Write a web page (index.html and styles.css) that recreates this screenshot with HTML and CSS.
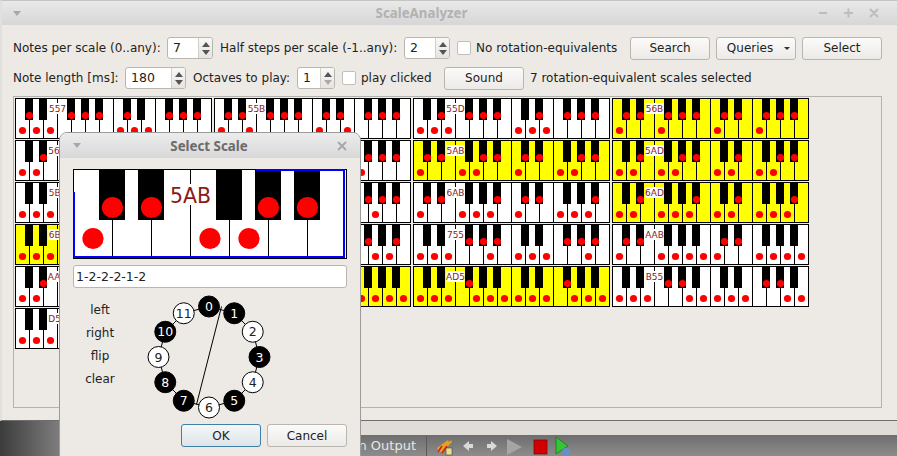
FILE: index.html
```html
<!DOCTYPE html>
<html lang="en">
<head>
    <meta charset="UTF-8">
    <title>ScaleAnalyzer</title>
    <link rel="stylesheet" href="styles.css">
</head>
<body>
    <div class="window">
        <div class="titlebar">
            <span class="menu-arrow"></span>
            <span class="title">ScaleAnalyzer</span>
            <svg class="win-buttons" width="64" height="12" viewBox="0 0 64 12">
                <path d="M0 6h8M25 6h9M29.500 1.500v9M51 2l8 8M59 2l-8 8" stroke="#bdbdbd" stroke-width="2" fill="none"/>
            </svg>
        </div>
        <div class="content">
            <div class="row">
                <label class="w-notes">Notes per scale (0..any):</label>
                <div class="spin w-46"><span>7</span><i class="arrows"><b class="up"></b><b class="down"></b></i></div>
                <label class="w-steps">Half steps per scale (-1..any):</label>
                <div class="spin w-46"><span>2</span><i class="arrows"><b class="up"></b><b class="down"></b></i></div>
                <span class="check"></span>
                <label class="w-norot">No rotation-equivalents</label>
                <button class="btn">Search</button>
                <button class="btn btn-menu">Queries<i class="caret"></i></button>
                <button class="btn">Select</button>
            </div>
            <div class="row row-last">
                <label class="w-length">Note length [ms]:</label>
                <div class="spin w-61"><span>180</span><i class="arrows"><b class="up"></b><b class="down"></b></i></div>
                <label class="w-octaves">Octaves to play:</label>
                <div class="spin w-38"><span>1</span><i class="arrows"><b class="up"></b><b class="down off"></b></i></div>
                <span class="check"></span>
                <label class="w-play">play clicked</label>
                <button class="btn">Sound</button>
                <label>7 rotation-equivalent scales selected</label>
            </div>
            <div class="scales" id="scales"></div>
        </div>
    </div>

    <div class="bottom">
        <div class="side"></div>
        <div class="rest">
            <div class="strip"></div>
            <div class="toolbar">
                <span class="tool-label">on Output</span>
                <span class="tool-sep"></span>
                <svg width="150" height="20" viewBox="0 0 150 20">
                    <path d="M0 12l11-8 1 2-7 7 9-9 1 2-10 10H2z" fill="#e8a020"/>
                    <path d="M1 16l4-6M5 17l5-7" stroke="#c22" stroke-width="1.500"/>
                    <rect x="9" y="12" width="6" height="7" fill="#e6e08a" stroke="#444" stroke-width=".6"/>
                    <path d="M32 5v3h4v4h-4v3l-6-5zM54 5v3h-4v4h4v3l6-5z" fill="#d9d9d9"/>
                    <path d="M70 3l15 8-15 8z" fill="#a5a5a5"/>
                    <rect x="97" y="4" width="13" height="14" fill="#d40000" stroke="#700" stroke-width=".7"/>
                    <path d="M119 1l12 9-12 8z" fill="#35c435" stroke="#1a6a1a" stroke-width=".7"/>
                    <circle cx="129" cy="16" r="4" fill="#6a8fc8"/>
                </svg>
            </div>
        </div>
    </div>

    <div class="dialog">
        <div class="dialog-title">
            <span class="menu-arrow"></span>
            <span class="title">Select Scale</span>
            <svg class="dialog-close" width="10" height="10" viewBox="0 0 10 10">
                <path d="M1 1l8 8M9 1l-8 8" stroke="#a8a8a8" stroke-width="2"/>
            </svg>
        </div>
        <div class="dialog-body">
            <div class="big-keys" id="bigKeys"></div>
            <div class="text-input">1-2-2-2-1-2</div>
            <div class="dial-row">
                <ul class="dial-actions">
                    <li>left</li>
                    <li>right</li>
                    <li>flip</li>
                    <li>clear</li>
                </ul>
                <div id="dial"></div>
            </div>
            <div class="dialog-buttons">
                <button class="btn btn-ok">OK</button>
                <button class="btn">Cancel</button>
            </div>
        </div>
    </div>

    <script src="app.js"></script>
</body>
</html>
```

FILE: styles.css
```css
* {
    box-sizing: border-box;
}
html, body {
    margin: 0;
    padding: 0;
}
body {
    width: 897px;
    height: 456px;
    overflow: hidden;
    position: relative;
    background: #edeae5;
    font-family: "DejaVu Sans", sans-serif;
    font-size: 12px;
    color: #222;
}
label {
    white-space: nowrap;
}

/* main window */
.window {
    height: 421px;
    border-top: 1px solid #c4c4c4;
    border-left: 2px solid #e0e0de;
    border-bottom: 1px solid #6e6e6e;
    background: #edeae5;
}
.titlebar {
    height: 24px;
    display: flex;
    align-items: center;
    padding-left: 11px;
    background: linear-gradient(#e9e9e9, #d6d6d6);
}
.titlebar .title {
    flex: 1;
    text-align: center;
    font-family: "Noto Sans", sans-serif;
    font-weight: bold;
    font-size: 13.300px;
    color: #b2b2b2;
    padding-left: 3px;
}
.menu-arrow {
    width: 0;
    height: 0;
    border-left: 4px solid transparent;
    border-right: 4px solid transparent;
    border-top: 5px solid #a8a8a8;
}
.win-buttons {
    margin-right: 14px;
}
.content {
    padding: 12px 0 0 11px;
}
.row {
    display: flex;
    align-items: center;
    height: 22px;
    margin-bottom: 8px;
}
.row-last {
    margin-bottom: 7px;
}
.w-notes { width: 154px; }
.w-steps { width: 184px; }
.w-norot { width: 154px; }
.w-length { width: 112px; }
.w-octaves { width: 104px; }
.w-play { width: 83px; }

/* form controls */
.spin {
    height: 22px;
    display: flex;
    background: #fff;
    border: 1px solid #b9b6b0;
    border-radius: 3px;
    margin-right: 7px;
}
.spin span {
    flex: 1;
    padding-left: 5px;
    line-height: 20px;
    font-size: 12.500px;
}
.w-46 { width: 46px; }
.w-61 { width: 61px; }
.w-38 { width: 38px; }
.arrows {
    width: 14px;
    display: flex;
    flex-direction: column;
    justify-content: center;
    align-items: center;
    gap: 3px;
    border-left: 1px solid #d2cfca;
    background: linear-gradient(#f8f8f7, #e6e4e0);
    border-radius: 0 2px 2px 0;
}
.arrows b {
    width: 0;
    height: 0;
    border-left: 4px solid transparent;
    border-right: 4px solid transparent;
}
.arrows .up { border-bottom: 5px solid #555; }
.arrows .down { border-top: 5px solid #555; }
.arrows .off { border-top-color: #aaa; }
.check {
    width: 14px;
    height: 14px;
    background: #fff;
    border: 1px solid #c2bfba;
    border-radius: 2px;
    margin-right: 5px;
}
.btn {
    width: 80px;
    height: 23px;
    padding: 0;
    margin-right: 6px;
    font-family: "DejaVu Sans", sans-serif;
    font-size: 12px;
    color: #222;
    background: linear-gradient(#fbfbfa, #eceae7);
    border: 1px solid #b9b6b0;
    border-radius: 3px;
    position: relative;
}
.btn-menu {
    padding-right: 12px;
}
.caret {
    position: absolute;
    right: 5px;
    top: 9px;
    border-left: 3px solid transparent;
    border-right: 3px solid transparent;
    border-top: 3px solid #333;
}

/* scale grid */
.scales {
    width: 869px;
    height: 312px;
    border: 1px solid #b4b2ad;
    padding: 1px;
    display: grid;
    grid-template-columns: repeat(4, 197px);
    grid-auto-rows: 41px;
    column-gap: 2px;
    row-gap: 1px;
    align-content: start;
}
.scales svg {
    display: block;
}

/* area below the window */
.bottom {
    height: 35px;
    display: flex;
}
.side {
    width: 360px;
    background: linear-gradient(90deg, #3c3c3c, #7e7e7e 60px);
}
.rest {
    flex: 1;
    display: flex;
    flex-direction: column;
}
.strip {
    height: 14px;
    background: #e0ddd8;
}
.toolbar {
    flex: 1;
    display: flex;
    align-items: center;
    background: linear-gradient(#6e6e6e, #8c8c8c);
}
.tool-label {
    width: 56px;
    display: flex;
    justify-content: flex-end;
    white-space: nowrap;
    font-size: 13px;
    color: #e6e6e6;
}
.tool-sep {
    width: 1px;
    height: 20px;
    margin: 0 10px;
    background: #5a5a5a;
}

/* Select Scale dialog, floats over the main window */
.dialog {
    position: absolute;
    left: 59px;
    top: 132px;
    width: 302px;
    height: 330px;
    background: #edeae5;
    border: 1px solid #9a9a9a;
    border-radius: 8px 8px 0 0;
}
.dialog-title {
    height: 25px;
    display: flex;
    align-items: center;
    padding: 0 13px;
    border-radius: 7px 7px 0 0;
    background: linear-gradient(#ececec, #d8d8d8);
}
.dialog-title .title {
    flex: 1;
    text-align: center;
    font-family: "Noto Sans", sans-serif;
    font-weight: bold;
    font-size: 13.300px;
    color: #6b6b6b;
}
.dialog-body {
    padding: 11px 13px 0 13px;
}
.big-keys svg {
    display: block;
}
.text-input {
    height: 23px;
    margin-top: 6px;
    padding-left: 2px;
    line-height: 21px;
    font-size: 12.500px;
    background: #fff;
    border: 1px solid #b9b6b0;
    border-radius: 3px;
}
.dial-row {
    display: flex;
    height: 129px;
    margin-top: 7px;
}
.dial-actions {
    list-style: none;
    margin: 6px 0 0;
    padding: 0;
    width: 54px;
    text-align: center;
}
.dial-actions li {
    height: 23px;
    line-height: 18px;
}
#dial {
    margin-left: 20px;
}
#dial svg {
    display: block;
}
.dialog-buttons {
    display: flex;
    justify-content: flex-end;
    gap: 6px;
}
.dialog-buttons .btn {
    margin: 0;
}
.btn-ok {
    border-color: #3f7ea6;
    background: linear-gradient(#f4f7f8, #dde4e8);
}
```

FILE: app.js
```js
// all 7 note scales, label is the note set as hex (bit 0 = lowest note)
const scales = ['557', '55B', '55D', '56B', '56D', '575', '5AB', '5AD', '5B5', '5D5', '6AB',
    '6AD', '6B5', '6D5', '755', 'AAB', 'AAD', 'AB5', 'AD5', 'B55', 'D55'];
const selected = ['56B', '5AB', '5AD', '6AD', '6B5', 'AB5', 'AD5'];
// these labels are covered by the dialog anyway
const covered = ['575', '5D5', '6D5', 'AB5'];

// note in octave -> [is black, position in white keys]
const notePos = [[0, 0], [1, 1], [0, 1], [1, 2], [0, 2], [0, 3], [1, 4], [0, 4], [1, 5], [0, 5], [1, 6], [0, 6]];
const blackSlots = [1, 2, 4, 5, 6];

function keyboard(hex, o) {
    const bits = parseInt(hex, 16);
    const w = o.keyW * 7 * o.octaves;
    let s = `<svg width="${w + 1}" height="${o.h + 1}" viewBox="0 0 ${w + 1} ${o.h + 1}">`;
    s += `<rect x=".5" y=".5" width="${w}" height="${o.h}" fill="${o.fill}" stroke="#000" shape-rendering="crispEdges"/>`;

    for (let k = 1; k < 7 * o.octaves; k++) {
        s += `<path d="M${k * o.keyW + 0.5} 0V${o.h}" stroke="#000" shape-rendering="crispEdges"/>`;
    }
    for (let oct = 0; oct < o.octaves; oct++) {
        for (const b of blackSlots) {
            const x = (oct * 7 + b) * o.keyW - o.blackW / 2;
            s += `<rect x="${x}" y="0" width="${o.blackW}" height="${o.blackH}" shape-rendering="crispEdges"/>`;
        }
        for (let n = 0; n < 12; n++) {
            if (!(bits >> n & 1)) continue;
            const [black, pos] = notePos[n];
            const k = oct * 7 + pos;
            const cx = black ? k * o.keyW + 0.5 : k * o.keyW + o.keyW / 2 + 0.5;
            const cy = black ? o.blackDot : o.whiteDot;
            s += `<circle cx="${cx}" cy="${cy}" r="${o.r}" fill="#f00"/>`;
        }
    }

    // label sits on the 3rd key line, with a white box behind it
    if (!covered.includes(hex)) {
        const lx = 3 * o.keyW + 0.5;
        s += `<rect x="${lx - o.boxW / 2}" y="${o.boxY}" width="${o.boxW}" height="${o.boxH}" fill="#fff"/>`;
        s += `<text x="${lx}" y="${o.textY}" text-anchor="middle" font-size="${o.font}" fill="#8b1a1a" font-family="DejaVu Sans">${hex}</text>`;
    }
    return s + o.extra + '</svg>';
}

const small = {
    keyW: 14, octaves: 2, h: 40, blackW: 8, blackH: 22, blackDot: 17.5, whiteDot: 32.5, r: 3.6,
    boxW: 18, boxH: 11, boxY: 5, textY: 14, font: 9, extra: ''
};
document.getElementById('scales').innerHTML = scales.map(hex =>
    keyboard(hex, { ...small, fill: selected.includes(hex) ? '#ff0' : '#fff' })).join('');

document.getElementById('bigKeys').innerHTML = keyboard('5AB', {
    keyW: 39, octaves: 1, h: 89, blackW: 26, blackH: 51, blackDot: 38.5, whiteDot: 69.5, r: 10.6,
    boxW: 42, boxH: 21, boxY: 15, textY: 34, font: 20.5, fill: '#fff',
    // focus frame, half drawn over the keys
    extra: '<path d="M1 23V88H271V1H183" fill="none" stroke="#00f" stroke-width="2" shape-rendering="crispEdges"/>'
});

// note circle
const cx = 62, cy = 62, radius = 50.5, nodeR = 10.5;
const points = [];
for (let n = 0; n < 12; n++) {
    const a = n * Math.PI / 6;
    points.push([cx + radius * Math.sin(a), cy - radius * Math.cos(a)]);
}
const scaleBits = parseInt('5AB', 16);
let dial = '<svg width="124" height="124" viewBox="0 0 124 124">';
dial += `<polygon points="${points.map(p => p.join(',')).join(' ')}" fill="none" stroke="#000"/>`;
dial += `<path d="M${cx + 12.500} ${cy - 50.500}L${cx - 12.500} ${cy + 47.500}" stroke="#000"/>`;
points.forEach((p, n) => {
    const on = scaleBits >> n & 1;
    dial += `<circle cx="${p[0]}" cy="${p[1]}" r="${nodeR}" fill="${on ? '#000' : '#fff'}" stroke="#000"/>`;
    dial += `<text x="${p[0]}" y="${p[1] + 4.500}" text-anchor="middle" font-size="12.500" fill="${on ? '#fff' : '#222'}" font-family="DejaVu Sans">${n}</text>`;
});
document.getElementById('dial').innerHTML = dial + '</svg>';
```
